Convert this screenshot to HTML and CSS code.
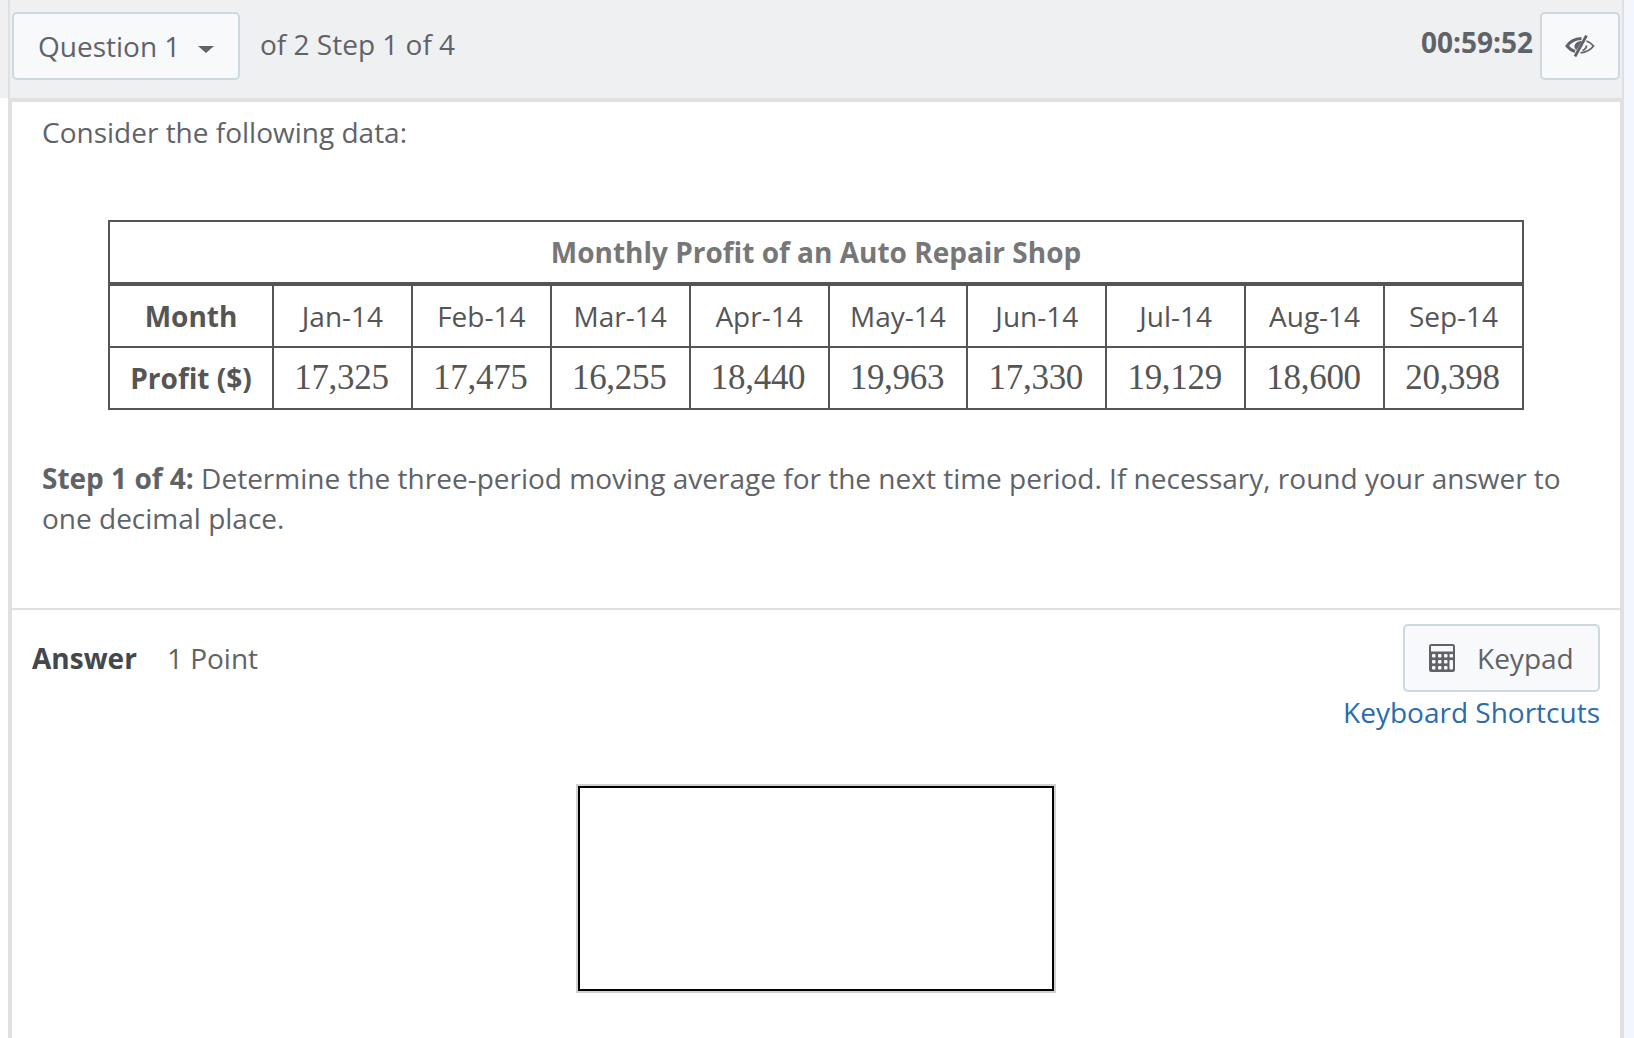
FILE: index.html
```html
<!DOCTYPE html>
<html lang="en">
<head>
    <meta charset="UTF-8">
    <meta name="viewport" content="width=device-width, initial-scale=1.0">
    <title>Question 1</title>
    <link rel="stylesheet" href="styles.css">
</head>
<body>
    <div class="page">
        <div class="top-bar">
            <button class="btn question-btn" type="button">Question 1 <span class="caret"></span></button>
            <span class="step-text">of 2 Step 1 of 4</span>
            <span class="timer">00:59:52</span>
            <button class="btn eye-btn" type="button" aria-label="Hide timer">
                <svg width="30" height="22" viewBox="0 0 30 22">
                    <path d="M10 16.500C7 15.500 4 13.500 2 11 5 6.500 10.500 3.800 16.500 3.500" stroke="#5f6368" stroke-width="3" fill="none"/>
                    <path d="M16 6C12 6.500 9 9 9.500 12c.2 1.300 1 2.300 2 3L17 6z" fill="#5f6368"/>
                    <path d="M21.500.5L10 21.500" stroke="#5f6368" stroke-width="2.800" fill="none"/>
                    <path d="M21.500 6c3 1 5.500 2.800 7 5-3 4-7.500 6.300-13 6.800M21.500 10.500c0 2-1.500 4-4 5" stroke="#5f6368" stroke-width="1.800" fill="none"/>
                </svg>
            </button>
        </div>
        <div class="panel">
            <div class="question">
                <p class="intro">Consider the following data:</p>
                <table class="data-table">
                    <colgroup>
                        <col class="head-col">
                        <col span="9">
                    </colgroup>
                    <tr class="title-row">
                        <th class="title-cell" colspan="10">Monthly Profit of an Auto Repair Shop</th>
                    </tr>
                    <tr>
                        <th class="row-head">Month</th>
                        <td>Jan-14</td>
                        <td>Feb-14</td>
                        <td>Mar-14</td>
                        <td>Apr-14</td>
                        <td>May-14</td>
                        <td>Jun-14</td>
                        <td>Jul-14</td>
                        <td>Aug-14</td>
                        <td>Sep-14</td>
                    </tr>
                    <tr class="values">
                        <th class="row-head">Profit ($)</th>
                        <td>17,325</td>
                        <td>17,475</td>
                        <td>16,255</td>
                        <td>18,440</td>
                        <td>19,963</td>
                        <td>17,330</td>
                        <td>19,129</td>
                        <td>18,600</td>
                        <td>20,398</td>
                    </tr>
                </table>
                <p class="step-desc"><strong>Step 1 of 4:</strong> Determine the three-period moving average for the next time period. If necessary, round your answer to one decimal place.</p>
            </div>
            <div class="answer">
                <div class="answer-head">
                    <div class="answer-label"><strong>Answer</strong><span class="points">1 Point</span></div>
                    <div class="answer-tools">
                        <button class="btn keypad-btn" type="button">
                            <svg width="26" height="28" viewBox="0 0 26 28">
                                <rect width="26" height="28" rx="2.500" fill="#5f6368"/>
                                <rect x="2" y="2" width="22" height="5.500" fill="#f7f9fb"/>
                                <g fill="#f7f9fb">
                                    <rect x="3" y="10" width="3.500" height="3.500" rx="1"/><rect x="9" y="10" width="3.500" height="3.500" rx="1"/><rect x="15" y="10" width="3.500" height="3.500" rx="1"/><rect x="20.500" y="10" width="3.500" height="3.500" rx="1"/>
                                    <rect x="3" y="16" width="3.500" height="3.500" rx="1"/><rect x="9" y="16" width="3.500" height="3.500" rx="1"/><rect x="15" y="16" width="3.500" height="3.500" rx="1"/><rect x="20.500" y="16" width="3.500" height="9.500" rx="1"/>
                                    <rect x="3" y="22" width="3.500" height="3.500" rx="1"/><rect x="9" y="22" width="3.500" height="3.500" rx="1"/><rect x="15" y="22" width="3.500" height="3.500" rx="1"/>
                                </g>
                            </svg>
                            Keypad
                        </button>
                        <a class="shortcuts" href="#">Keyboard Shortcuts</a>
                    </div>
                </div>
                <div class="answer-box"></div>
            </div>
        </div>
    </div>
</body>
</html>
```

FILE: styles.css
```css
html, body {
    margin: 0;
    height: 100%;
}
body {
    background: #f3f7fd;
    font-family: 'Open Sans', sans-serif;
    font-size: 28px;
    color: #5f6368;
    overflow: hidden;
}
.page {
    width: 1624px;
    height: 1038px;
    box-sizing: border-box;
    background: linear-gradient(#eff0f2 98px, #fff 98px);
    padding-left: 8px;
}
.top-bar {
    height: 98px;
    box-sizing: border-box;
    display: flex;
    align-items: flex-start;
    padding: 12px 2px 0 2px;
    background: #eff0f2;
    border: solid #e0e0e0;
    border-width: 0 2px;
}
.btn {
    font-family: inherit;
    font-size: 28px;
    color: #5f6368;
    background: #f7f9fb;
    border: 2px solid #cdd8df;
    border-radius: 5px;
    height: 68px;
    box-sizing: border-box;
}
.question-btn {
    width: 228px;
    padding: 0 0 0 24px;
    text-align: left;
    line-height: 62px;
}
.caret {
    display: inline-block;
    width: 0;
    height: 0;
    margin-left: 10px;
    vertical-align: middle;
    border-left: 8px solid transparent;
    border-right: 8px solid transparent;
    border-top: 7px solid #5f6368;
}
.step-text {
    margin-left: 20px;
    line-height: 64px;
}
.timer {
    margin-left: auto;
    margin-right: 7px;
    font-weight: 700;
    line-height: 60px;
}
.eye-btn {
    width: 80px;
    padding: 0;
    display: flex;
    align-items: center;
    justify-content: center;
}
.panel {
    height: 936px;
    border: solid #e0e0e0;
    border-width: 4px 4px 0 4px;
    background: #fff;
}
.question {
    height: 506px;
    padding: 0 30px;
    border-bottom: 2px solid #e0e0e0;
}
.intro {
    margin: 0;
    line-height: 60px;
}
.data-table {
    width: 1416px;
    margin: 58px 0 0 66px;
    border-collapse: collapse;
    table-layout: fixed;
    color: #555;
}
.head-col {
    width: 164px;
}
.data-table th, .data-table td {
    border: 2px solid #555;
    padding: 0;
    text-align: center;
    font-weight: 400;
    height: 60px;
}
.data-table .title-cell {
    height: 60px;
    font-weight: 700;
    color: #777;
    border-bottom-width: 4px;
}
.data-table .row-head {
    font-weight: 700;
}
.values td {
    font-family: 'Liberation Serif', serif;
    font-size: 35px;
    letter-spacing: -0.3px;
    padding-right: 2px;
}
.step-desc {
    margin: 48px 0 0 0;
    line-height: 40px;
}
.step-desc strong {
    font-weight: 700;
}
.answer {
    padding: 14px 20px 0 20px;
}
.answer-head {
    display: flex;
    justify-content: space-between;
    align-items: flex-start;
}
.answer-label {
    padding-top: 15px;
    color: #44484d;
}
.points {
    margin-left: 30px;
    color: #5f6368;
}
.answer-tools {
    display: flex;
    flex-direction: column;
    align-items: flex-end;
}
.keypad-btn {
    width: 197px;
    display: flex;
    align-items: center;
    padding: 0 0 0 24px;
    gap: 22px;
}
.shortcuts {
    color: #2a6cad;
    text-decoration: none;
    line-height: 40px;
}
.answer-box {
    width: 472px;
    height: 201px;
    margin: 54px 0 0 546px;
    border: 2px solid #000;
    outline: 2px solid #d0d0d0;
}
```
